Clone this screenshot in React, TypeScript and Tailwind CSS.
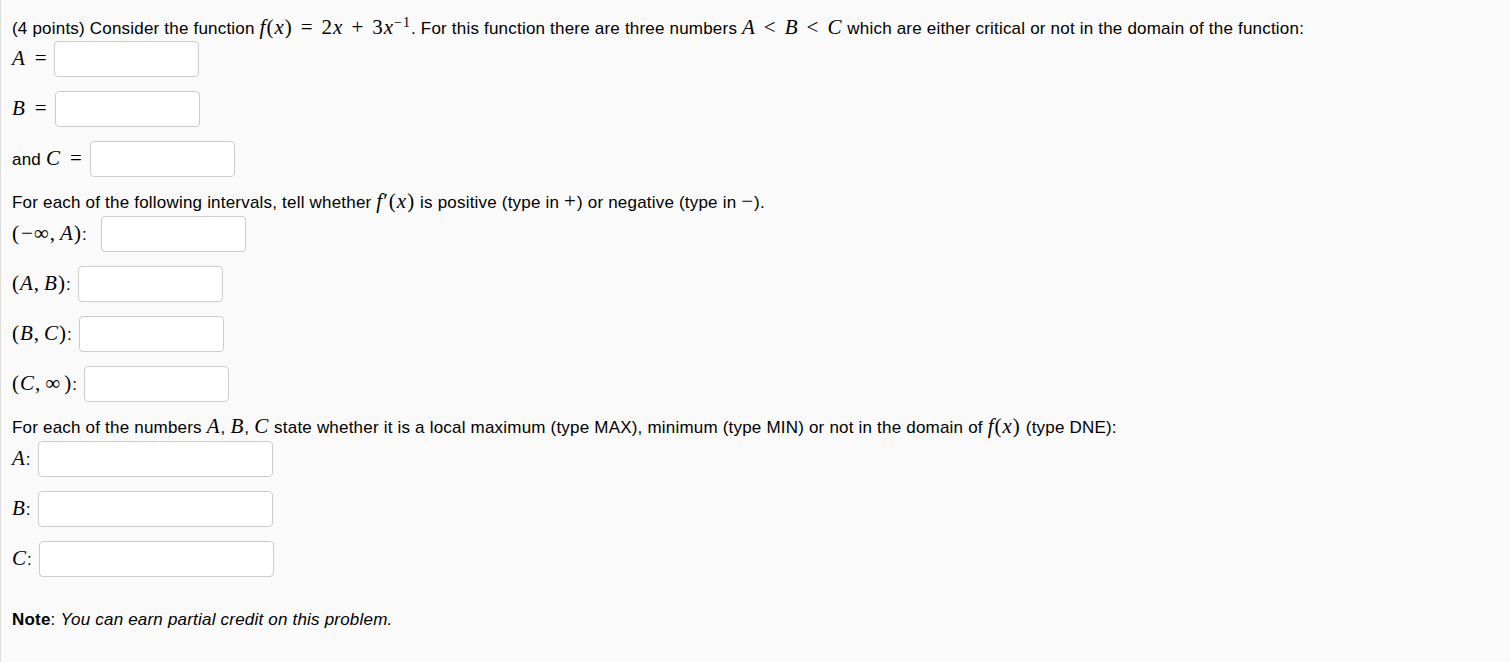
import React from 'react'

// italic math variable
function V({ children }: { children: React.ReactNode }) {
  return <span className="italic">{children}</span>
}

function M({ children }: { children: React.ReactNode }) {
  return (
    <span className="font-['Liberation_Serif','DejaVu_Serif',serif] text-[21px] leading-none tracking-[1px]">
      {children}
    </span>
  )
}

function Op({ children }: { children: React.ReactNode }) {
  return <span className="mx-[8px]">{children}</span>
}

// comma with a thin space after it
function Cm() {
  return <span className="mr-[4px]">,</span>
}

function Box({ wide }: { wide?: boolean }) {
  return (
    <input
      type="text"
      className={
        'block h-[36px] rounded-[4px] border border-[#cccccc] bg-white px-2 outline-none ' +
        (wide ? 'w-[235px]' : 'w-[145px]')
      }
    />
  )
}

function Row({ label, wide, mt, gap }: { label: React.ReactNode; wide?: boolean; mt: string; gap?: string }) {
  return (
    <div className={'flex h-[36px] items-center ' + mt}>
      <span className="whitespace-nowrap">{label}</span>
      <span className={'flex ' + (gap ?? 'ml-[7px]')}>
        <Box wide={wide} />
      </span>
    </div>
  )
}

function Eq() {
  return <span className="ml-[9px]">=</span>
}

export default function App() {
  return (
    <div className="min-h-[662px] border-l border-[#dddddd] bg-[#fafafa] pl-[11px] pt-[17px] font-['Liberation_Sans',Arial,sans-serif] text-[17px] leading-[20px] tracking-[0.2px] text-black">
      <div className="h-[20px] whitespace-nowrap">
        (4 points) Consider the function{' '}
        <M>
          <V>f</V>(<V>x</V>)<Op>=</Op>2<V>x</V>
          <Op>+</Op>3<V>x</V>
          <sup className="text-[14px]">−1</sup>
        </M>
        . For this function there are three numbers{' '}
        <M>
          <V>A</V>
          <Op>&lt;</Op>
          <V>B</V>
          <Op>&lt;</Op>
          <V>C</V>
        </M>{' '}
        which are either critical or not in the domain of the function:
      </div>

      <Row
        mt="mt-[4px]"
        gap="ml-[6px]"
        label={
          <M>
            <V>A</V>
            <Eq />
          </M>
        }
      />
      <Row
        mt="mt-[14px]"
        gap="ml-[7px]"
        label={
          <M>
            <V>B</V>
            <Eq />
          </M>
        }
      />
      <Row
        mt="mt-[14px]"
        gap="ml-[7px]"
        label={
          <>
            and{' '}
            <M>
              <V>C</V>
              <Eq />
            </M>
          </>
        }
      />

      <div className="mt-[14px] h-[20px] whitespace-nowrap">
        For each of the following intervals, tell whether{' '}
        <M>
          <V>f</V>′(<V>x</V>)
        </M>{' '}
        is positive (type in <M>+</M>) or negative (type in <M>−</M>).
      </div>

      <Row
        mt="mt-[5px]"
        gap="ml-[14px]"
        label={
          <>
            <M>
              (<span className="ml-[1px]">−∞</span>
              <Cm />
              <V>A</V>)
            </M>
            :
          </>
        }
      />
      <Row
        mt="mt-[14px]"
        label={
          <>
            <M>
              (<V>A</V>
              <Cm />
              <V>B</V>)
            </M>
            :
          </>
        }
      />
      <Row
        mt="mt-[14px]"
        label={
          <>
            <M>
              (<V>B</V>
              <Cm />
              <V>C</V>)
            </M>
            :
          </>
        }
      />
      <Row
        mt="mt-[14px]"
        label={
          <>
            <M>
              (<V>C</V>
              <Cm />
              <span className="mr-[3px]">∞</span>)
            </M>
            :
          </>
        }
      />

      <div className="mt-[14px] h-[20px] whitespace-nowrap">
        For each of the numbers{' '}
        <M>
          <V>A</V>
        </M>
        ,{' '}
        <M>
          <V>B</V>
        </M>
        ,{' '}
        <M>
          <V>C</V>
        </M>{' '}
        state whether it is a local maximum (type MAX), minimum (type MIN) or not in the domain of{' '}
        <M>
          <V>f</V>(<V>x</V>)
        </M>{' '}
        (type DNE):
      </div>

      <Row
        wide
        mt="mt-[5px]"
        label={
          <>
            <M>
              <V>A</V>
            </M>
            :
          </>
        }
      />
      <Row
        wide
        mt="mt-[14px]"
        label={
          <>
            <M>
              <V>B</V>
            </M>
            :
          </>
        }
      />
      <Row
        wide
        mt="mt-[14px]"
        label={
          <>
            <M>
              <V>C</V>
            </M>
            :
          </>
        }
      />

      <div className="mt-[33px] h-[20px] whitespace-nowrap">
        <span className="font-bold">Note</span>: <span className="italic">You can earn partial credit on this problem.</span>
      </div>
    </div>
  )
}
